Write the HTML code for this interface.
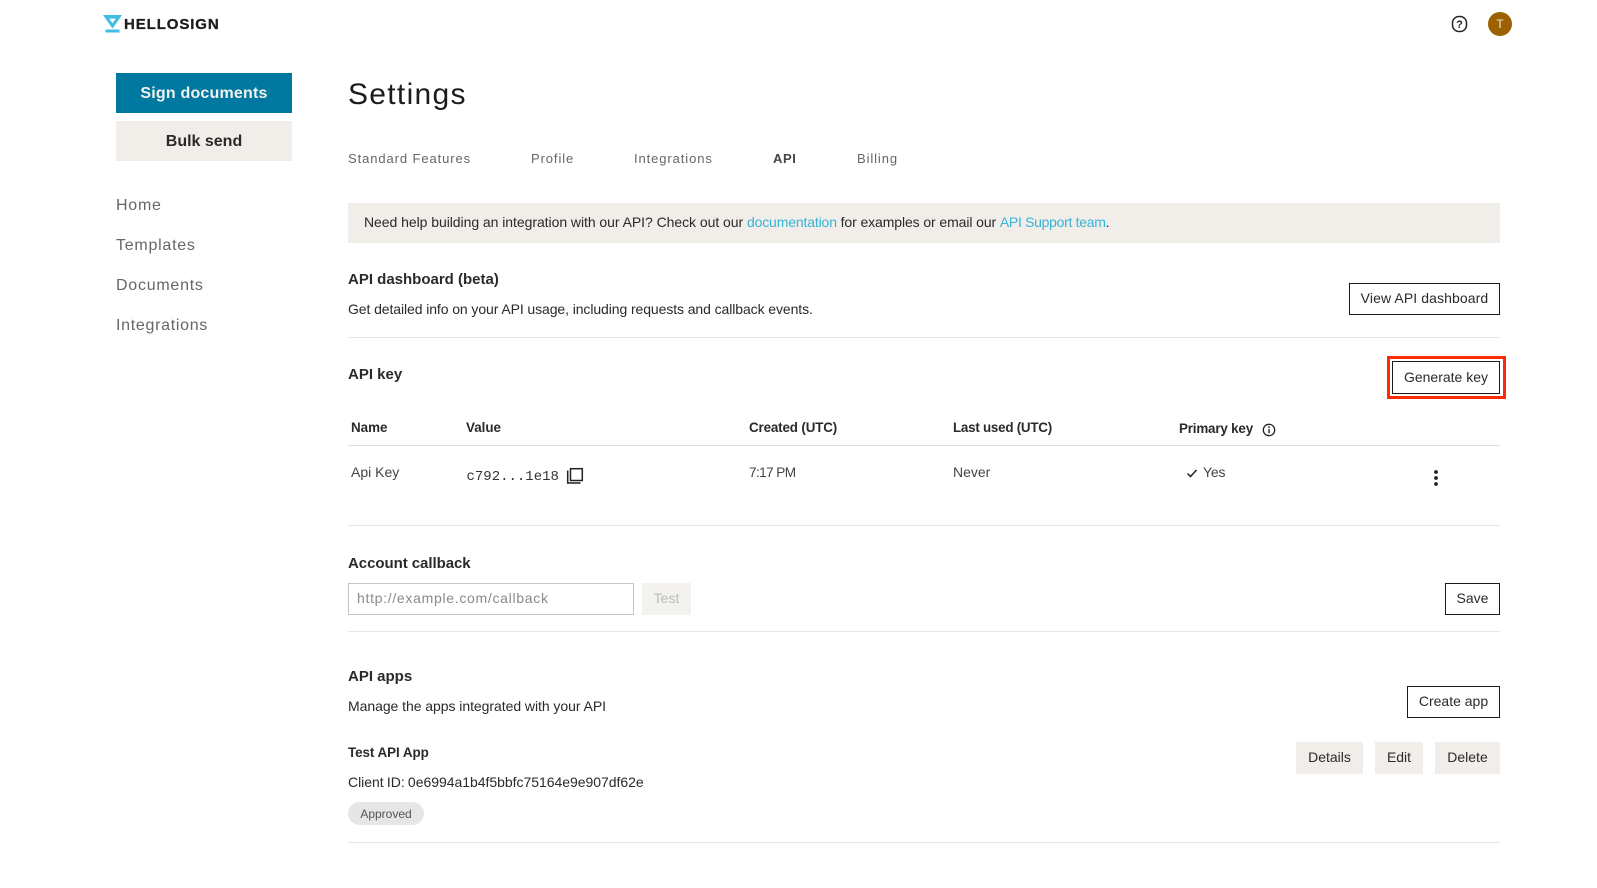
<!DOCTYPE html>
<html><head><meta charset="utf-8"><style>
html,body{margin:0;padding:0;background:#fff}
#p{position:relative;width:1597px;height:888px;overflow:hidden;font-family:"Liberation Sans",sans-serif;color:#2a2a2a}
.t{position:absolute;white-space:nowrap;line-height:20px;height:20px;font-size:14px}
.b{font-weight:bold}
.h{font-size:13.4px}
.btn{position:absolute;box-sizing:border-box;text-align:center;font-size:14px;color:#2a2a2a}
.o{border:1px solid #1a1a1a;background:#fff}
.g{background:#f1eeea}
.l{position:absolute;left:348px;width:1152px;height:1px;background:#e6e6e6}
svg{position:absolute}
</style></head><body><div id="p">
<svg style="left:103px;top:15px" width="21" height="19" viewBox="0 0 21 19"><path d="M0 0H19L9.5 13.5Z" fill="#40bde0"/><path d="M6.2 3.6H12.8L9.5 8.3Z" fill="#fff"/><rect x="2.5" y="14.5" width="14" height="3" fill="#40bde0"/></svg>
<div class="t b" style="left:124px;top:14.5px;font-size:15px;letter-spacing:.9px;color:#1c1c1c;-webkit-text-stroke:.3px #1c1c1c">HELLOSIGN</div>
<svg style="left:1450px;top:15px" width="20" height="18" viewBox="0 0 20 18"><rect x="2.5" y="1.5" width="14" height="15" rx="6.5" fill="none" stroke="#222" stroke-width="1.5"/><text x="9.5" y="13" font-size="11" font-weight="bold" text-anchor="middle" fill="#222" font-family="Liberation Sans">?</text></svg>
<div style="position:absolute;left:1488px;top:12px;width:24px;height:24px;border-radius:50%;background:#9b6000;color:#f3e6d0;font-size:12px;line-height:25px;text-align:center">T</div>

<div class="btn" style="left:116px;top:73px;width:176px;height:40px;line-height:42px;background:#00789f;color:#f2f2f2;font-size:16px;font-weight:bold;letter-spacing:.2px">Sign documents</div>
<div class="btn g" style="left:116px;top:121px;width:176px;height:40px;line-height:42px;font-size:16px;font-weight:bold">Bulk send</div>
<div class="t" style="left:116px;top:196px;font-size:16px;color:#666;letter-spacing:.75px">Home</div>
<div class="t" style="left:116px;top:236px;font-size:16px;color:#666;letter-spacing:.75px">Templates</div>
<div class="t" style="left:116px;top:276px;font-size:16px;color:#666;letter-spacing:.75px">Documents</div>
<div class="t" style="left:116px;top:316px;font-size:16px;color:#666;letter-spacing:.7px">Integrations</div>

<div class="t" style="left:348px;top:77px;font-size:30px;line-height:36px;height:36px;color:#1c1c1c;letter-spacing:1.3px">Settings</div>
<div class="t" style="left:348px;top:149px;font-size:13px;color:#666;letter-spacing:.9px">Standard Features</div>
<div class="t" style="left:531px;top:149px;font-size:13px;color:#666;letter-spacing:.9px">Profile</div>
<div class="t" style="left:634px;top:149px;font-size:13px;color:#666;letter-spacing:.9px">Integrations</div>
<div class="t b" style="left:773px;top:149px;font-size:13px;color:#444;letter-spacing:.6px">API</div>
<div class="t" style="left:857px;top:149px;font-size:13px;color:#666;letter-spacing:.9px">Billing</div>

<div style="position:absolute;left:348px;top:203px;width:1152px;height:40px;background:#f1eeea"></div>
<div class="t" style="left:364px;top:212px;letter-spacing:-.05px">Need help building an integration with our API? Check out our <span style="color:#35b4d8;letter-spacing:-.15px">documentation</span><span style="letter-spacing:-.1px"> for examples or email our </span><span style="color:#35b4d8;letter-spacing:-.3px">API Support team</span>.</div>

<div class="t b" style="left:348px;top:270px;font-size:15px">API dashboard (beta)</div>
<div class="t" style="left:348px;top:299px;letter-spacing:-.09px">Get detailed info on your API usage, including requests and callback events.</div>
<div class="btn o" style="left:1349px;top:283px;width:151px;height:32px;line-height:28px;letter-spacing:.1px">View API dashboard</div>
<div class="l" style="top:337px"></div>

<div class="t b" style="left:348px;top:365px;font-size:15px">API key</div>
<div style="position:absolute;box-sizing:border-box;left:1387px;top:356px;width:119px;height:43px;border:3px solid #fb2a0a"></div>
<div class="btn o" style="left:1392px;top:361px;width:108px;height:33px;line-height:31px">Generate key</div>

<div class="t b h" style="left:351px;top:418px">Name</div>
<div class="t b h" style="left:466px;top:418px">Value</div>
<div class="t b h" style="left:749px;top:418px;letter-spacing:-.15px">Created (UTC)</div>
<div class="t b h" style="left:953px;top:418px;letter-spacing:-.25px">Last used (UTC)</div>
<div class="t b h" style="left:1179px;top:419px;letter-spacing:-.18px">Primary key</div>
<svg style="left:1262px;top:423px" width="14" height="14" viewBox="0 0 14 14"><circle cx="7" cy="7" r="5.7" fill="none" stroke="#222" stroke-width="1.3"/><path d="M7 6.2V10.2" stroke="#222" stroke-width="1.4"/><circle cx="7" cy="4.2" r=".9" fill="#222"/></svg>
<div class="l" style="top:445px;background:#ddd"></div>
<div class="t" style="left:351px;top:462px;color:#444">Api Key</div>
<div class="t" style="left:466.5px;top:467px;font-family:'Liberation Mono',monospace;font-size:14px;color:#333">c792...1e18</div>
<svg style="left:566px;top:467px" width="18" height="18" viewBox="0 0 18 18"><path d="M1.7 3.5V16H14.5" fill="none" stroke="#222" stroke-width="1.5"/><rect x="4.5" y="1.7" width="11.8" height="11.8" fill="none" stroke="#222" stroke-width="1.5"/></svg>
<div class="t" style="left:749px;top:463px;color:#444;font-size:13.6px;letter-spacing:-.6px">7:17 PM</div>
<div class="t" style="left:953px;top:462px;color:#444">Never</div>
<svg style="left:1186px;top:467px" width="12" height="12" viewBox="0 0 12 12"><path d="M1.5 6.5L4.5 9.5L10.5 3" fill="none" stroke="#222" stroke-width="1.5"/></svg>
<div class="t" style="left:1203px;top:462px;color:#444;letter-spacing:-.2px">Yes</div>
<svg style="left:1431px;top:469px" width="10" height="20" viewBox="0 0 10 20"><circle cx="5" cy="3" r="1.9" fill="#222"/><circle cx="5" cy="9" r="1.9" fill="#222"/><circle cx="5" cy="15" r="1.9" fill="#222"/></svg>
<div class="l" style="top:525px"></div>

<div class="t b" style="left:348px;top:554px;font-size:15px;letter-spacing:-.05px">Account callback</div>
<div style="position:absolute;box-sizing:border-box;left:348px;top:583px;width:286px;height:32px;border:1px solid #c4c4c4"></div>
<div class="t" style="left:357px;top:588px;color:#8a8a8a;letter-spacing:.7px">http://example.com/callback</div>
<div class="btn g" style="left:642px;top:583px;width:49px;height:32px;line-height:31px;color:#bcbcbc;background:#f4f2ee">Test</div>
<div class="btn o" style="left:1445px;top:583px;width:55px;height:32px;line-height:29px">Save</div>
<div class="l" style="top:631px"></div>

<div class="t b" style="left:348px;top:667px;font-size:15px">API apps</div>
<div class="t" style="left:348px;top:696px;letter-spacing:-.05px">Manage the apps integrated with your API</div>
<div class="btn o" style="left:1407px;top:686px;width:93px;height:32px;line-height:29px">Create app</div>
<div class="t b h" style="left:348px;top:743px;letter-spacing:-.05px">Test API App</div>
<div class="t" style="left:348px;top:772px;letter-spacing:-.03px;word-spacing:-.6px">Client ID: 0e6994a1b4f5bbfc75164e9e907df62e</div>
<div class="btn" style="left:348px;top:802px;width:76px;height:23px;line-height:24px;border-radius:12px;background:#e6e6e6;font-size:12px;color:#555">Approved</div>
<div class="btn g" style="left:1296px;top:742px;width:67px;height:32px;line-height:31px">Details</div>
<div class="btn g" style="left:1375px;top:742px;width:48px;height:32px;line-height:31px">Edit</div>
<div class="btn g" style="left:1435px;top:742px;width:65px;height:32px;line-height:31px">Delete</div>
<div class="l" style="top:842px"></div>
</div></body></html>
